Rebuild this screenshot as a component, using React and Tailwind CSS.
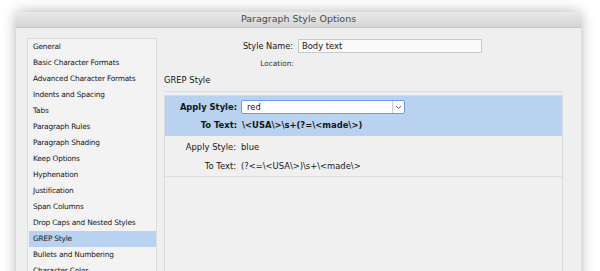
export default function App() {
  const sections = [
    "General",
    "Basic Character Formats",
    "Advanced Character Formats",
    "Indents and Spacing",
    "Tabs",
    "Paragraph Rules",
    "Paragraph Shading",
    "Keep Options",
    "Hyphenation",
    "Justification",
    "Span Columns",
    "Drop Caps and Nested Styles",
    "GREP Style",
    "Bullets and Numbering",
    "Character Color",
    "OpenType Features",
  ];

  return (
    <div
      className="w-[600px] h-[271px] overflow-hidden bg-white pt-[12px] pl-[16px] text-[#161616]"
      style={{ fontFamily: '"DejaVu Sans", "Noto Sans", sans-serif' }}
    >
      <div className="w-[565px] h-[300px] rounded-t-[5px] bg-[#efefef] shadow-[0_0_14px_rgba(0,0,0,0.3)] overflow-hidden">
        {/* Title bar */}
        <div className="h-[16px] flex items-center justify-center bg-gradient-to-b from-[#e9e9e9] to-[#d5d5d5] border-b border-[#c4c4c4] text-[9.5px] text-[#4b4b4b]">
          Paragraph Style Options
        </div>

        <div className="flex pl-[11px] pt-[10px]">
          {/* Sidebar */}
          <div className="w-[130px] h-[260px] bg-[#f3f3f3] border border-[#dcdcdc]">
            <ul className="pl-[1px]">
              {sections.map((s) => (
                <li
                  key={s}
                  className={`h-[16px] flex items-center pl-[4px] text-[7.4px] tracking-[-0.2px] whitespace-nowrap ${
                    s === "GREP Style" ? "bg-[#b8d2ef]" : ""
                  }`}
                >
                  {s}
                </li>
              ))}
            </ul>
          </div>

          {/* Main panel */}
          <div className="ml-[7px] w-[399px]">
            <div className="flex items-center mt-[1px] h-[14px]">
              <div className="w-[129px] text-right text-[8.2px]">Style Name:</div>
              <div className="ml-[5px] w-[184px] h-[14px] bg-[#fafafa] border border-[#c9c9c9] flex items-center pl-[3px] text-[8.4px]">
                Body text
              </div>
            </div>
            <div className="flex items-center h-[12px] mt-[5px]">
              <div className="w-[130px] text-right text-[7.4px] text-[#333]">Location:</div>
            </div>
            <div className="mt-[4px] h-[12px] flex items-center text-[8.4px]">GREP Style</div>
            <div className="mt-[5px] border-t border-[#dedede]" />

            {/* GREP list */}
            <div className="mt-[3px] h-[200px] border border-[#dadada] bg-[#f0f0f0]">
              <div className="bg-[#b8d2ef] h-[40px] pt-[4px]">
                <div className="flex items-center h-[14px]">
                  <div className="w-[72px] text-right text-[8.4px] font-bold">Apply Style:</div>
                  <div className="ml-[4px] w-[164px] h-[14px] bg-white border border-[#6a9fe6] rounded-[2px] flex items-center">
                    <div className="flex-1 pl-[5px] text-[8.4px]">red</div>
                    <div className="w-[12px] h-full border-l border-[#cfcfcf] flex items-center justify-center">
                      <svg width="7" height="5" viewBox="0 0 7 5">
                        <path d="M1 1 L3.5 3.5 L6 1" fill="none" stroke="#555" strokeWidth="0.9" />
                      </svg>
                    </div>
                  </div>
                </div>
                <div className="flex items-center h-[12px] mt-[5px]">
                  <div className="w-[72px] text-right text-[8.4px] font-bold">To Text:</div>
                  <div className="ml-[5px] text-[8.4px] font-bold whitespace-nowrap">{"\\<USA\\>\\s+(?=\\<made\\>)"}</div>
                </div>
              </div>
              <div className="h-[41px] border-b border-[#dedede] pt-[5px]">
                <div className="flex items-center h-[12px]">
                  <div className="w-[71px] text-right text-[8.4px]">Apply Style:</div>
                  <div className="ml-[5px] text-[8.4px]">blue</div>
                </div>
                <div className="flex items-center h-[12px] mt-[7px]">
                  <div className="w-[71px] text-right text-[8.4px]">To Text:</div>
                  <div className="ml-[5px] text-[8.4px] whitespace-nowrap">{"(?<=\\<USA\\>)\\s+\\<made\\>"}</div>
                </div>
              </div>
            </div>
          </div>
        </div>
      </div>
    </div>
  );
}
